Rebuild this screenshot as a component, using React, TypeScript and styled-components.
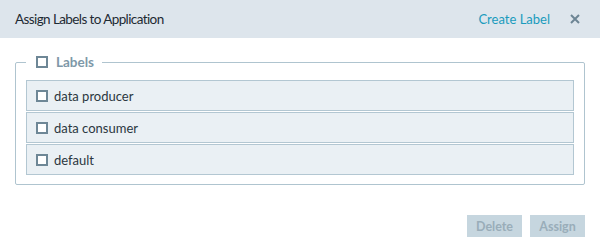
import React from "react";
import styled, { createGlobalStyle } from "styled-components";

const GlobalStyle = createGlobalStyle`
  html, body {
    margin: 0;
    padding: 0;
    background: #ffffff;
  }
  body {
    font-family: Lato, "Open Sans", sans-serif;
  }
`;

const Dialog = styled.div`
  width: 600px;
  height: 245px;
  display: flex;
  flex-direction: column;
  background: #ffffff;
`;

const Header = styled.div`
  height: 38px;
  display: flex;
  align-items: center;
  padding: 0 20px 0 15px;
  background: #dde5ec;
`;

const Title = styled.h1`
  flex: 1;
  margin: 0;
  font-size: 13.5px;
  letter-spacing: -0.6px;
  font-weight: 400;
  color: #1e2a33;
`;

const HeaderLink = styled.a`
  font-size: 13px;
  color: #1a9bbd;
  margin-right: 20px;
  cursor: pointer;
`;

const CloseButton = styled.button`
  border: none;
  background: none;
  padding: 0;
  width: 10px;
  height: 10px;
  display: flex;
  cursor: pointer;
`;

const Body = styled.div`
  flex: 1;
  padding: 16px 15px 0;
`;

const Group = styled.fieldset`
  margin: 0;
  padding: 0 10px 9px;
  border: 1px solid #afc4cf;
  border-radius: 2px;
`;

const Legend = styled.legend`
  display: flex;
  align-items: center;
  gap: 8px;
  padding: 0 8px 0 10px;
  font-size: 13.5px;
  font-weight: 700;
  color: #7e98a8;
  margin-bottom: 10px;
`;

const List = styled.div`
  display: flex;
  flex-direction: column;
  gap: 1px;
`;

const Row = styled.label`
  display: flex;
  align-items: center;
  gap: 6px;
  height: 31px;
  box-sizing: border-box;
  padding-left: 9px;
  background: #eaf0f4;
  border: 1px solid #b3c7d2;
  font-size: 13px;
  color: #2b3740;
`;

const Box = styled.span`
  display: inline-block;
  width: 12px;
  height: 12px;
  box-sizing: border-box;
  border: 2px solid #6e8796;
  background: #ffffff;
  flex-shrink: 0;
`;

const Footer = styled.div`
  display: flex;
  justify-content: flex-end;
  gap: 8px;
  padding: 0 15px 8px;
`;

const Button = styled.button<{ $w: number }>`
  height: 22px;
  width: ${(p) => p.$w}px;
  border: none;
  background: #c6d6df;
  color: #99adb9;
  font-family: Lato, "Open Sans", sans-serif;
  font-size: 12.5px;
  font-weight: 700;
  padding: 0;
`;

const labels = ["data producer", "data consumer", "default"];

export default function App() {
  return (
    <Dialog>
      <GlobalStyle />
      <Header>
        <Title>Assign Labels to Application</Title>
        <HeaderLink>Create Label</HeaderLink>
        <CloseButton aria-label="close">
          <svg width="10" height="10" viewBox="0 0 10 10">
            <path d="M1 1 L9 9 M9 1 L1 9" stroke="#6d8594" strokeWidth="2" />
          </svg>
        </CloseButton>
      </Header>
      <Body>
        <Group>
          <Legend>
            <Box />
            Labels
          </Legend>
          <List>
            {labels.map((l) => (
              <Row key={l}>
                <Box />
                {l}
              </Row>
            ))}
          </List>
        </Group>
      </Body>
      <Footer>
        <Button $w={55} disabled>
          Delete
        </Button>
        <Button $w={55} disabled>
          Assign
        </Button>
      </Footer>
    </Dialog>
  );
}
